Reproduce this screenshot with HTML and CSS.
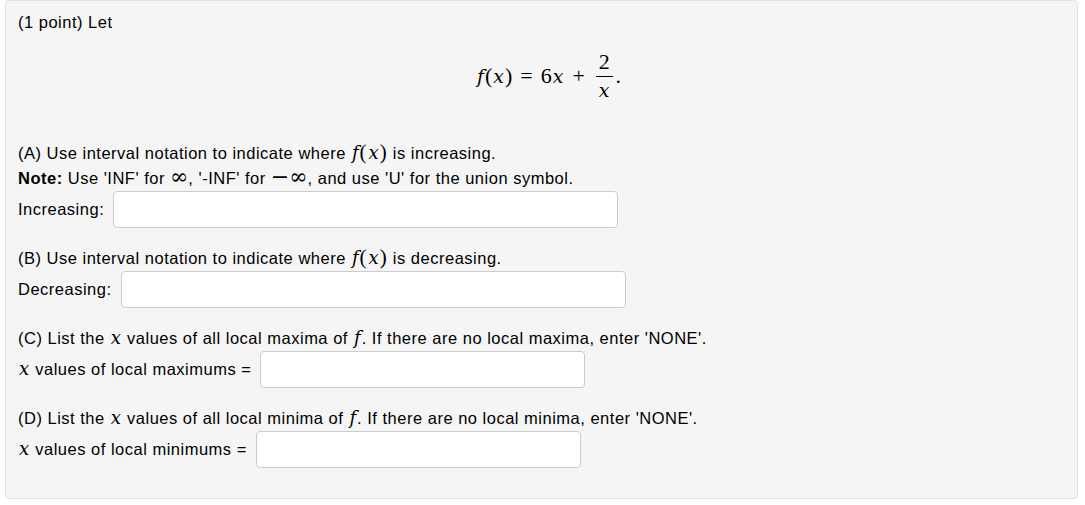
FILE: index.html
```html
<!DOCTYPE html>
<html>
<head>
<meta charset="utf-8">
<link rel="stylesheet" href="styles.css">
</head>
<body>
<div class="panel">
  <div class="line">(1 point) Let</div>
  <div class="display">
    <span class="mi">f</span><span class="mo">(</span><span class="mi">x</span><span class="mo">)</span><span class="mrel">=</span><span class="mn">6</span><span class="mi">x</span><span class="mbin">+</span><span class="frac"><span class="num">2</span><span class="den"><span class="mi">x</span></span></span><span class="mo">.</span>
  </div>

  <div class="part">
    <div class="line">(A) Use interval notation to indicate where <span class="im"><span class="mi">f</span>(<span class="mi">x</span>)</span> is increasing.</div>
    <div class="line"><b>Note:</b> Use 'INF' for <span class="im inf">∞</span>, '-INF' for <span class="im inf">−∞</span>, and use 'U' for the union symbol.</div>
    <div class="row"><span class="label">Increasing:</span><input class="answer wide" type="text"></div>
  </div>

  <div class="part">
    <div class="line">(B) Use interval notation to indicate where <span class="im"><span class="mi">f</span>(<span class="mi">x</span>)</span> is decreasing.</div>
    <div class="row"><span class="label">Decreasing:</span><input class="answer wide" type="text"></div>
  </div>

  <div class="part">
    <div class="line">(C) List the <span class="im"><span class="mi">x</span></span> values of all local maxima of <span class="im"><span class="mi">f</span></span>. If there are no local maxima, enter 'NONE'.</div>
    <div class="row"><span class="label"><span class="im"><span class="mi">x</span></span> values of local maximums =</span><input class="answer narrow" type="text"></div>
  </div>

  <div class="part">
    <div class="line">(D) List the <span class="im"><span class="mi">x</span></span> values of all local minima of <span class="im"><span class="mi">f</span></span>. If there are no local minima, enter 'NONE'.</div>
    <div class="row"><span class="label"><span class="im"><span class="mi">x</span></span> values of local minimums =</span><input class="answer narrow" type="text"></div>
  </div>
</div>
</body>
</html>
```

FILE: styles.css
```css
html, body {
  margin: 0;
  padding: 0;
  background: #fff;
}
body {
  padding: 0 7px 0 5px;
  font-family: "Liberation Sans", Arial, sans-serif;
  font-size: 16.5px;
  letter-spacing: 0.5px;
  color: #000;
}
.panel {
  box-sizing: border-box;
  height: 499px;
  background: #f5f5f5;
  border: 1px solid #e3e3e3;
  border-radius: 4px;
  padding: 9px 12px 0 12px;
}
.line {
  line-height: 25px;
  white-space: nowrap;
}
.display {
  display: flex;
  justify-content: center;
  align-items: center;
  height: 106px;
  box-sizing: border-box;
  padding: 16px 0 41px 14px;
  font-family: "Liberation Serif", "DejaVu Serif", serif;
  font-size: 22px;
  letter-spacing: 0;
}
.mi {
  font-family: "DejaVu Serif", serif;
  font-style: italic;
  font-size: 0.86em;
  letter-spacing: 0;
}
.display .mi { padding: 0 1px; }
.mo, .mn { font-style: normal; }
.mrel { padding: 0 8px; }
.mbin { padding: 0 8px; }
.frac {
  display: inline-flex;
  flex-direction: column;
  align-items: center;
  margin: 0 2px 0 2px;
}
.num {
  line-height: 22px;
  padding: 0 3px 3px;
  border-bottom: 1px solid #000;
}
.den {
  line-height: 22px;
  padding: 2px 3px 0;
}
.im {
  font-family: "Liberation Serif", serif;
  font-size: 21px;
  line-height: 0;
  letter-spacing: 1px;
}
.im .mi { padding: 0 1px; }
.inf {
  font-family: "DejaVu Serif", serif;
  font-size: 22px;
  letter-spacing: 0;
}
.part + .part {
  margin-top: 18px;
}
.row {
  display: flex;
  align-items: center;
  height: 37px;
}
.label {
  margin-right: 9px;
  white-space: nowrap;
}
.answer {
  box-sizing: border-box;
  height: 37px;
  background: #fff;
  border: 1px solid #ccc;
  border-radius: 4px;
  padding: 4px 8px;
  font-size: 16px;
  font-family: "Liberation Sans", Arial, sans-serif;
}
.wide { width: 505px; }
.narrow { width: 325px; }
```
